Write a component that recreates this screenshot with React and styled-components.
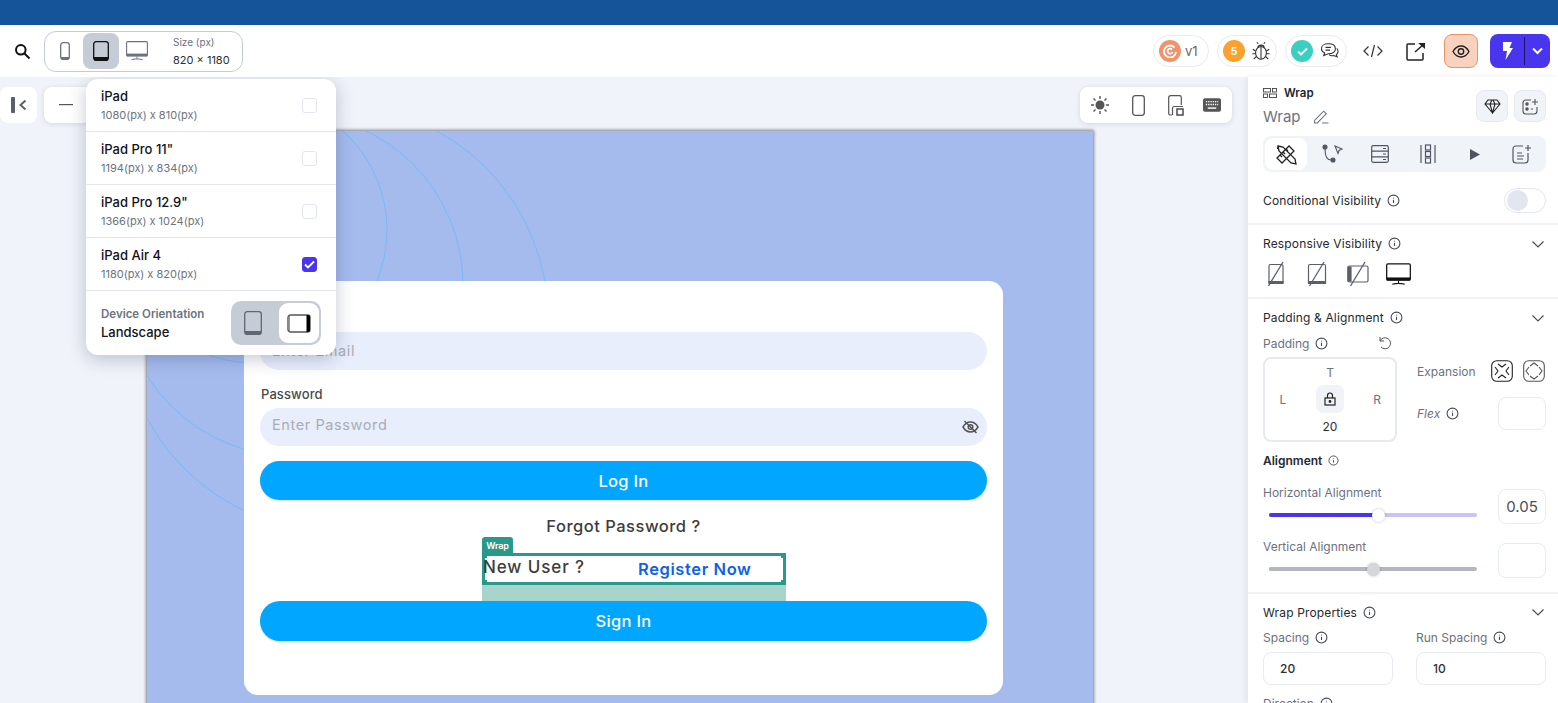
import React from "react";
import styled, { createGlobalStyle } from "styled-components";

const Global = createGlobalStyle`
  html, body { margin: 0; padding: 0; height: 100%; overflow: hidden; background: #f0f3f9; }
  body { font-family: Inter, "Open Sans", sans-serif; color: #2b2f36; }
  * { box-sizing: border-box; }
`;

const Page = styled.div`
  width: 1558px;
  height: 703px;
  display: flex;
  flex-direction: column;
  overflow: hidden;
`;
const TopStrip = styled.div`
  height: 25px;
  background: #155499;
  flex: none;
`;
const Toolbar = styled.header`
  height: 52px;
  flex: none;
  background: #fff;
  display: flex;
  align-items: center;
  padding: 0 8px 0 14px;
`;
const DeviceGroup = styled.div`
  margin-left: 13px;
  width: 199px;
  height: 41px;
  border: 1px solid #c3ccd6;
  border-radius: 12px;
  display: flex;
  align-items: center;
  padding: 0 2px;
`;
const DeviceBtn = styled.div`
  width: 36px;
  height: 36px;
  border-radius: 8px;
  display: flex;
  align-items: center;
  justify-content: center;
  background: ${(p) => (p.$active ? "#c5ccd6" : "transparent")};
`;
const SizeInfo = styled.div`
  margin-left: 18px;
  display: flex;
  flex-direction: column;
  gap: 5px;
  font-size: 10px;
  color: #6b7280;
  strong { font-weight: 400; font-size: 11px; color: #2b2f36; }
`;
const ToolRight = styled.div`
  margin-left: auto;
  display: flex;
  align-items: center;
`;
const Pill = styled.div`
  width: ${(p) => p.$w}px;
  height: 32px;
  border: 1px solid #e8ebf1;
  border-radius: 16px;
  display: flex;
  align-items: center;
  gap: ${(p) => p.$gap}px;
  padding-left: 5px;
  margin-right: 8px;
  font-size: 13px;
  color: #5f6673;
`;
const Dot = styled.span`
  width: 22px;
  height: 22px;
  border-radius: 50%;
  background: ${(p) => p.$bg};
  color: #fff;
  font-size: 11px;
  font-weight: 700;
  display: flex;
  align-items: center;
  justify-content: center;
  flex: none;
`;
const PlainIcon = styled.div`
  width: 34px;
  display: flex;
  justify-content: center;
  margin-left: ${(p) => p.$ml || 0}px;
`;
const EyeBtn = styled.div`
  margin-left: 11px;
  width: 34px;
  height: 34px;
  border-radius: 8px;
  background: #f8d2be;
  border: 1.5px solid #ee9165;
  display: flex;
  align-items: center;
  justify-content: center;
`;
const RunBtn = styled.div`
  margin-left: 12px;
  width: 60px;
  height: 34px;
  border-radius: 8px;
  background: #4a35ee;
  display: flex;
  align-items: center;
`;
const RunPart = styled.div`
  width: ${(p) => p.$w}px;
  height: 28px;
  display: flex;
  align-items: center;
  justify-content: center;
  border-left: ${(p) => (p.$line ? "1px solid #1b1466" : "none")};
`;

const Main = styled.div`
  flex: 1;
  min-height: 0;
  display: flex;
`;
const Canvas = styled.main`
  position: relative;
  flex: 1;
  min-width: 0;
  overflow: hidden;
  padding-top: 10px;
  background: #f0f3f9;
`;
const CanvasBar = styled.div`
  display: flex;
  align-items: flex-start;
  height: 44px;
  padding-right: 16px;
`;
const FloatCard = styled.div`
  height: 36px;
  background: #fff;
  border-radius: 8px;
  display: flex;
  align-items: center;
  justify-content: ${(p) => p.$justify || "center"};
  gap: ${(p) => p.$gap || 0}px;
  width: ${(p) => p.$w}px;
  margin-left: ${(p) => p.$ml || "0"};
  box-shadow: ${(p) => (p.$flat ? "none" : "0 1px 5px rgba(40,50,80,.14)")};
  padding: ${(p) => p.$pad || 0};
`;
const CardIcon = styled.span`
  width: 18px;
  display: flex;
  justify-content: center;
  margin-left: ${(p) => p.$ml || 0}px;
`;
const Device = styled.div`
  position: relative;
  margin-left: 147px;
  width: 946px;
  height: 620px;
  background: #a5bbee;
  box-shadow: 0 0 3px 1px rgba(50, 55, 65, 0.6);
  padding: 150px 0 0 97px;
`;
const Arcs = styled.svg`
  position: absolute;
  left: 0;
  top: 0;
`;
const FormCard = styled.div`
  position: relative;
  width: 759px;
  height: 414px;
  background: #fff;
  border-radius: 14px;
  padding: 51px 16px 0;
  color: #3d3d3d;
  font-weight: 500;
`;
const Field = styled.div`
  height: 38px;
  border-radius: 19px;
  background: #e8eefc;
  color: #a9adb5;
  font-size: 14.5px;
  display: flex;
  align-items: center;
  justify-content: space-between;
  padding: 0 8px ${(p) => p.$lift}px 12px;
  font-weight: 400;
  letter-spacing: 0.6px;
  svg { margin-top: ${(p) => p.$lift}px; }
`;
const FieldLabel = styled.div`
  font-size: 13px;
  font-weight: 500;
  color: #4a4a4a;
  margin: 16px 0 6px 1px;
  line-height: 16px;
  letter-spacing: 0.1px;
`;
const PrimaryBtn = styled.div`
  height: ${(p) => p.$h || 39}px;
  border-radius: 20px;
  background: #00a6ff;
  color: #fff;
  font-size: 16.5px;
  font-weight: 500;
  letter-spacing: 0.3px;
  display: flex;
  align-items: center;
  justify-content: center;
  margin-top: ${(p) => p.$mt}px;
  box-shadow: 0 1px 2px rgba(0, 0, 0, 0.15);
  position: relative;
`;
const Forgot = styled.div`
  text-align: center;
  font-size: 16.5px;
  line-height: 20px;
  margin-top: 16px;
  letter-spacing: 0.5px;
`;
const WrapSlot = styled.div`
  position: relative;
  margin: 17px 0 0 222px;
  width: 304px;
  height: 48px;
  background: #a8d4cc;
`;
const WrapSelect = styled.div`
  height: 32px;
  background: #fff;
  border: 3px solid #28998a;
  display: flex;
  align-items: flex-start;
  font-size: 17px;
  line-height: 20px;
`;
const WrapTag = styled.div`
  position: absolute;
  left: 0;
  top: -16px;
  height: 16px;
  width: 31px;
  background: #28998a;
  color: #fff;
  border-radius: 3px 3px 0 0;
  font-size: 9px;
  font-weight: 600;
  letter-spacing: -0.2px;
  display: flex;
  align-items: center;
  justify-content: center;
`;
const Handle = styled.i`
  position: absolute;
  width: 5px;
  height: 5px;
  background: #28998a;
  ${(p) => (p.$top ? "top: 0;" : "bottom: 16px;")}
  ${(p) => (p.$left ? "left: 0;" : "right: 0;")}
`;
const RegisterLink = styled.span`
  color: #0f62e6;
  font-size: 16.5px;
  font-weight: 600;
  margin: 3px 0 0 53px;
  letter-spacing: 0.6px;
`;
const NewUser = styled.span`
  margin: 1px 0 0 -2px;
  letter-spacing: 0.9px;
`;

const Popup = styled.div`
  position: absolute;
  left: 86px;
  top: 2px;
  width: 250px;
  height: 276px;
  background: #fff;
  border-radius: 12px;
  box-shadow: 0 4px 18px rgba(30, 40, 70, 0.25);
  display: flex;
  flex-direction: column;
  z-index: 3;
`;
const PopRow = styled.div`
  height: 53px;
  flex: none;
  border-bottom: 1px solid #e3e6ee;
  display: flex;
  align-items: center;
  justify-content: space-between;
  padding: 0 19px 0 15px;
`;
const PopName = styled.div`
  font-size: 13px;
  font-weight: 500;
  color: #11131a;
  line-height: 18px;
  margin-bottom: 2px;
`;
const PopSub = styled.div`
  font-size: 11px;
  color: #6d7380;
  line-height: 16px;
`;
const Check = styled.span`
  width: 15px;
  height: 15px;
  border-radius: 3px;
  border: 1px solid ${(p) => (p.$on ? "#4a35ee" : "#e3e6ee")};
  background: ${(p) => (p.$on ? "#4a35ee" : "#fff")};
  display: flex;
  align-items: center;
  justify-content: center;
`;
const OrientRow = styled.div`
  flex: 1;
  display: flex;
  align-items: center;
  justify-content: space-between;
  padding: 0 15px;
`;
const OrientLabel = styled.div`
  font-size: 11.5px;
  font-weight: 600;
  color: #6d7380;
  line-height: 16px;
  margin-bottom: 2px;
`;
const OrientValue = styled.div`
  font-size: 13px;
  font-weight: 500;
  color: #11131a;
`;
const OrientSwitch = styled.div`
  width: 90px;
  height: 44px;
  border-radius: 10px;
  background: #c5ccd6;
  display: flex;
  justify-content: flex-end;
  align-items: center;
  padding: 2px;
`;
const OrientPortrait = styled.div`
  width: 48px;
  margin-right: 6px;
  display: flex;
  justify-content: center;
`;
const OrientActive = styled.div`
  width: 40px;
  height: 40px;
  border-radius: 9px;
  background: #fff;
  display: flex;
  align-items: center;
  justify-content: center;
  flex: none;
`;

const Panel = styled.aside`
  width: 310px;
  flex: none;
  background: #fff;
  box-shadow: -2px 0 6px rgba(40, 50, 80, 0.08);
  overflow: hidden;
  position: relative;
`;
const PanelHead = styled.div`
  padding: 8px 12px 0 15px;
  height: 111px;
`;
const HeadTop = styled.div`
  display: flex;
  justify-content: space-between;
  height: 51px;
`;
const Kind = styled.div`
  display: flex;
  align-items: center;
  gap: 7px;
  font-size: 11.5px;
  font-weight: 600;
  color: #20242b;
  height: 16px;
`;
const WrapName = styled.div`
  display: flex;
  align-items: center;
  gap: 12px;
  font-size: 15px;
  color: #6b7280;
  margin-top: 5px;
  height: 20px;
`;
const HeadBtns = styled.div`
  display: flex;
  gap: 6px;
  padding-top: 5px;
`;
const SquareBtn = styled.div`
  width: 32px;
  height: 32px;
  border-radius: 8px;
  background: #f0f3f8;
  border: 1px solid #e6e9f0;
  display: flex;
  align-items: center;
  justify-content: center;
`;
const Tabs = styled.div`
  height: 36px;
  width: 283px;
  background: #f0f3f8;
  border-radius: 8px;
  display: flex;
  align-items: center;
  padding: 2px;
  gap: 5.2px;
`;
const Tab = styled.div`
  width: 42px;
  height: 32px;
  border-radius: 8px;
  background: ${(p) => (p.$active ? "#fff" : "transparent")};
  display: flex;
  align-items: center;
  justify-content: center;
`;
const Section = styled.section`
  height: ${(p) => p.$h}px;
  border-bottom: ${(p) => (p.$noline ? "none" : "2px solid #f0f2f8")};
  padding: 0 13px 0 15px;
  position: relative;
`;
const Row = styled.div`
  display: flex;
  align-items: center;
  justify-content: space-between;
  height: ${(p) => p.$h || 24}px;
`;
const Title = styled.div`
  display: flex;
  align-items: center;
  gap: 6px;
  font-size: 12px;
  font-weight: ${(p) => (p.$bold ? 600 : 400)};
  letter-spacing: ${(p) => (p.$bold ? 0 : 0.15)}px;
  color: #25282e;
`;
const SubLabel = styled.div`
  display: flex;
  align-items: center;
  gap: 6px;
  font-size: 12px;
  line-height: 15px;
  color: #6b7280;
  font-style: ${(p) => (p.$italic ? "italic" : "normal")};
  margin-top: ${(p) => p.$mt || 0}px;
`;
const ResetIcon = styled.svg`
  margin-left: 44px;
`;
const Toggle = styled.div`
  width: 42px;
  height: 25px;
  margin-right: -1px;
  border: 1px solid #e3e6ee;
  border-radius: 13px;
  padding: 2px;
  display: flex;
  align-items: center;
  &::before {
    content: "";
    width: 21px;
    height: 21px;
    border-radius: 50%;
    background: #e2e6ee;
  }
`;
const IconRow = styled.div`
  display: flex;
  align-items: center;
  gap: 15px;
  margin-top: -1px;
  height: 26px;
`;
const PadRow = styled.div`
  display: flex;
  margin: 7px -1px 0 0;
`;
const PadBox = styled.div`
  width: 134px;
  height: 85px;
  border: 2px solid #e6e9f0;
  border-radius: 8px;
  display: grid;
  grid-template-columns: 30px 1fr 30px;
  grid-template-rows: 26px 28px 27px;
  justify-items: center;
  align-items: center;
  padding: 0 3px;
  font-size: 12px;
  color: #6b7280;
`;
const PadTop = styled.span`
  grid-column: 2;
`;
const PadLeft = styled.span`
  grid-column: 1;
`;
const PadValue = styled.span`
  grid-column: 2;
  color: #2b2f36;
`;
const LockWrap = styled.div`
  width: 28px;
  height: 28px;
  border-radius: 7px;
  background: #f0f3f8;
  display: flex;
  align-items: center;
  justify-content: center;
`;
const PadSide = styled.div`
  flex: 1;
  padding-left: 20px;
`;
const ExpRow = styled.div`
  display: flex;
  align-items: center;
  height: 26px;
  margin: 1px 0 13px;
  padding-right: 1px;
  font-size: 12px;
  color: #6b7280;
  span { flex: 1; }
  svg { margin-left: 10px; }
`;
const SmallBox = styled.div`
  width: 48px;
  height: ${(p) => p.$h || 33}px;
  margin-top: ${(p) => p.$mt || 0}px;
  margin-right: ${(p) => p.$mr || 0}px;
  border: 1px solid #e8ebf1;
  border-radius: 8px;
  font-size: 15px;
  color: #4a4f58;
  display: flex;
  align-items: center;
  justify-content: center;
  flex: none;
`;
const SliderRow = styled.div`
  display: flex;
  justify-content: space-between;
  align-items: flex-start;
  height: ${(p) => p.$h}px;
  margin: ${(p) => p.$mt || 0}px -1px 0 0;
`;
const SliderCol = styled.div`
  width: 214px;
  padding-top: 1px;
`;
const Track = styled.div`
  position: relative;
  margin: 13px 0 0 6px;
  width: 208px;
  height: 4px;
  border-radius: 2px;
  background: ${(p) => (p.$muted ? "#b3b7bd" : "#c9c2fb")};
  &::before {
    content: "";
    position: absolute;
    left: 0;
    top: 0;
    bottom: 0;
    width: ${(p) => p.$pct}%;
    border-radius: 2px;
    background: ${(p) => (p.$muted ? "#b3b7bd" : "#4a35ee")};
  }
`;
const Thumb = styled.i`
  position: absolute;
  left: ${(p) => p.$pct}%;
  top: 50%;
  width: 13px;
  height: 13px;
  margin: -6.5px 0 0 -6.5px;
  border-radius: 50%;
  background: ${(p) => (p.$muted ? "#d4d6da" : "#fff")};
  box-shadow: 0 0 3px rgba(0, 0, 0, 0.25);
`;
const SpacingGrid = styled.div`
  display: grid;
  grid-template-columns: 130px 130px;
  justify-content: space-between;
  margin-right: -1px;
`;
const ValueBox = styled.div`
  height: 33px;
  margin-top: 7px;
  border: 1px solid #e8ebf1;
  border-radius: 8px;
  font-size: 12px;
  font-weight: 500;
  color: #2b2f36;
  display: flex;
  align-items: center;
  padding-left: 16px;
`;

const Info = ({ s = 13 }) => (
  <svg width={s} height={s} viewBox="0 0 12 12" fill="none" stroke="#444a55" strokeWidth="1">
    <circle cx="6" cy="6" r="5" />
    <path d="M6 5.400v3M6 3.400v.8" />
  </svg>
);
const Chevron = ({ c = "#4a4f58", s = 14 }) => (
  <svg width={s} height={s} viewBox="0 0 14 14" fill="none" stroke={c} strokeWidth="1.200">
    <path d="M1.500 4.500 7 10l5.500-5.500" />
  </svg>
);
const Search = () => (
  <svg width="17" height="17" viewBox="0 0 17 17" fill="none" stroke="#111" strokeWidth="2">
    <circle cx="6.800" cy="6.800" r="4.800" />
    <path d="m10.500 10.500 5 5" />
  </svg>
);
const TabletShape = ({ w = 17, h = 20, c = "#111", foot = 3 }) => (
  <svg width={w} height={h} viewBox={`0 0 ${w} ${h}`} fill="none">
    <rect x=".7" y=".7" width={w - 1.4} height={h - 1.4} rx="2.500" stroke={c} strokeWidth="1.300" />
    <path d={`M.7 ${h - foot - 1}h${w - 1.4}v${foot - 1}a2 2 0 0 1-2 2h-${w - 5.4}a2 2 0 0 1-2-2z`} fill={c} />
  </svg>
);
const Monitor = ({ c = "#6b7280", w = 22, h = 20 }) => (
  <svg width={w} height={h} viewBox="0 0 22 20" fill="none">
    <rect x=".6" y=".6" width="20.800" height="14.400" rx="1" stroke={c} strokeWidth="1.100" />
    <rect x=".6" y="12.600" width="20.800" height="2.600" fill={c} />
    <path d="M11 15.500v2M5.500 18.600c3-.9 8-.9 11 0" stroke={c} strokeWidth="1" />
  </svg>
);
const Landscape = () => (
  <svg width="24" height="19" viewBox="0 0 24 19" fill="none">
    <rect x="1" y="1" width="22" height="17" rx="2.500" stroke="#555" strokeWidth="1.400" />
    <path d="M2 1.700h1v15.600H2z" fill="#e08a1e" />
    <path d="M19.500 1h1.500a2 2 0 0 1 2 2v13a2 2 0 0 1-2 2h-1.500z" fill="#000" />
  </svg>
);
const Tick = () => (
  <svg width="11" height="9" viewBox="0 0 11 9" fill="none" stroke="#fff" strokeWidth="1.800">
    <path d="m1 4.500 3 3 6-6" />
  </svg>
);
const Slashed = ({ w, h, land }) => (
  <svg width="26" height="26" viewBox="0 0 26 26" fill="none" stroke="#5a5f68" strokeWidth="1.200">
    <rect x={13 - w / 2} y={13 - h / 2} width={w} height={h} rx="1.500" />
    {land ? <path d={`M${13 - w / 2} ${13 - h / 2 + 1}h3v${h - 2}h-3z`} fill="#5a5f68" /> : <path d={`M${13 - w / 2} ${13 + h / 2 - 2}h${w}v2h-${w}z`} fill="#5a5f68" />}
    <path d="M5.500 25 20 1" strokeWidth="1.300" />
  </svg>
);

function DeviceOption({ name, size, on }) {
  return (
    <PopRow>
      <div>
        <PopName>{name}</PopName>
        <PopSub>{size}</PopSub>
      </div>
      <Check $on={on}>{on && <Tick />}</Check>
    </PopRow>
  );
}

const S = "#4f5560";

export default function App() {
  return (
    <Page>
      <Global />
      <TopStrip />
      <Toolbar>
        <Search />
        <DeviceGroup>
          <DeviceBtn>
            <TabletShape w={10} h={18} c="#6b7280" foot={2} />
          </DeviceBtn>
          <DeviceBtn $active>
            <TabletShape w={16} h={20} />
          </DeviceBtn>
          <DeviceBtn>
            <Monitor />
          </DeviceBtn>
          <SizeInfo>
            <span>Size (px)</span>
            <strong>820 x 1180</strong>
          </SizeInfo>
        </DeviceGroup>
        <ToolRight>
          <Pill $w={56} $gap={4}>
            <Dot $bg="#f0936a">
              <svg width="14" height="14" viewBox="0 0 14 14" fill="none" stroke="#fff" strokeWidth="1.800">
                <path d="M11.500 3.500A6 6 0 1 0 13 8" />
                <path d="M9 5.500A2.500 2.500 0 1 0 9.500 8" />
              </svg>
            </Dot>
            v1
          </Pill>
          <Pill $w={60} $gap={6}>
            <Dot $bg="#fba12d">5</Dot>
            <svg width="20" height="20" viewBox="0 0 22 22" fill="none" stroke="#333" strokeWidth="1.200">
              <ellipse cx="11" cy="13" rx="6" ry="7" />
              <path d="M11 6v14M7.500 7.500c0-4 7-4 7 0M8 3 6.500 1.500M14 3l1.500-1.500M5 11 2 9M17 11l3-2M5 14H1.500M17 14h3.500M6 17l-3 3M16 17l3 3" />
            </svg>
          </Pill>
          <Pill $w={62} $gap={7}>
            <Dot $bg="#3acfc0">
              <Tick />
            </Dot>
            <svg width="20" height="18" viewBox="0 0 22 20" fill="none" stroke="#333" strokeWidth="1.200">
              <path d="M9 2c4.500 0 8 2 8 5.500S13.500 13 9 13l-5 2 1-3C2.500 11 1.500 9 1.500 7.500 1.500 4 5 2 9 2z" />
              <path d="M6 6h6M6 9h5M18.500 7c2 2 2 5-.5 7l1 2.500-4-1.500c-2 .5-4 0-5-1" />
            </svg>
          </Pill>
          <PlainIcon $ml={1}>
            <svg width="20" height="14" viewBox="0 0 20 14" fill="none" stroke="#333" strokeWidth="1.200">
              <path d="M5.500 2.500 1 7l4.500 4.500M14.500 2.500 19 7l-4.500 4.500M11.500 1 8.500 13" />
            </svg>
          </PlainIcon>
          <PlainIcon $ml={9}>
            <svg width="20" height="19" viewBox="0 0 20 19" fill="none" stroke="#222" strokeWidth="1.500">
              <path d="M9 2H2a1 1 0 0 0-1 1v14a1 1 0 0 0 1 1h14a1 1 0 0 0 1-1v-6" />
              <path d="M9 10 18 2" />
              <path d="M12 1h7v6z" fill="#222" stroke="none" />
            </svg>
          </PlainIcon>
          <EyeBtn>
            <svg width="18" height="13" viewBox="0 0 18 13" fill="none" stroke="#222" strokeWidth="1.400">
              <path d="M1 6.500C3 3 5.800 1 9 1s6 2 8 5.500C15 10 12.200 12 9 12S3 10 1 6.500z" />
              <circle cx="9" cy="6.500" r="2.700" />
            </svg>
          </EyeBtn>
          <RunBtn>
            <RunPart $w={34}>
              <svg width="11" height="18" viewBox="0 0 11 18">
                <path d="M1 0h9L7.500 6H11L3.500 18 5 9H1z" fill="#fff" />
              </svg>
            </RunPart>
            <RunPart $w={26} $line>
              <svg width="11" height="8" viewBox="0 0 11 8" fill="none" stroke="#fff" strokeWidth="2">
                <path d="m1 1.500 4.500 4.500L10 1.500" />
              </svg>
            </RunPart>
          </RunBtn>
        </ToolRight>
      </Toolbar>

      <Main>
        <Canvas>
          <CanvasBar>
            <FloatCard $w={37} $flat>
              <svg width="16" height="18" viewBox="0 0 16 18">
                <rect x="0" y="1" width="4" height="16" rx="1" fill="#5a606b" />
                <path d="M14.500 4.500 9.500 9l5 4.500" fill="none" stroke="#5a606b" strokeWidth="2" />
              </svg>
            </FloatCard>
            <FloatCard $w={70} $ml="7px" $justify="flex-start" $pad="0 0 0 15px">
              <svg width="14" height="2" viewBox="0 0 14 2">
                <rect width="14" height="1.200" fill="#555" />
              </svg>
            </FloatCard>
            <FloatCard $w={152} $ml="auto" $justify="flex-start" $gap={20} $pad="0 0 0 11px">
              <CardIcon>
                <svg width="18" height="18" viewBox="0 0 18 18" fill="#555">
                  <circle cx="9" cy="9" r="4.500" />
                  <path d="M9 0v3M9 15v3M0 9h3M15 9h3M2.500 2.500l2 2M13.500 13.500l2 2M15.500 2.500l-2 2M4.500 13.500l-2 2" stroke="#555" strokeWidth="1.400" />
                </svg>
              </CardIcon>
              <CardIcon>
                <svg width="13" height="21" viewBox="0 0 13 21" fill="none" stroke="#555" strokeWidth="1.300">
                  <rect x=".7" y=".7" width="11.600" height="19.600" rx="2.500" />
                </svg>
              </CardIcon>
              <CardIcon>
                <svg width="16" height="21" viewBox="0 0 16 21" fill="none" stroke="#555" strokeWidth="1.200">
                  <path d="M4 20H2.500A1.800 1.800 0 0 1 .7 18.200V2.500A1.800 1.800 0 0 1 2.500.7h9a1.800 1.800 0 0 1 1.800 1.800V10" />
                  <path d="M4.500 20v-6.500a2 2 0 0 1 2-2H15" />
                  <rect x="9" y="14" width="6" height="6" strokeWidth="1.600" />
                </svg>
              </CardIcon>
              <CardIcon $ml={-2}>
                <svg width="19" height="14" viewBox="0 0 19 14">
                  <rect width="19" height="14" rx="2" fill="#555" />
                  <path d="M3 3.500h13M3 6.500h13" stroke="#fff" strokeWidth="1.400" strokeDasharray="1.400 1" />
                  <rect x="5" y="9.500" width="9" height="1.500" fill="#fff" />
                </svg>
              </CardIcon>
            </FloatCard>
          </CanvasBar>

          <Device>
            <Arcs width="946" height="620" viewBox="147 131 946 620" fill="none" stroke="#7ab8fa" strokeWidth="1">
              <circle cx="254" cy="230" r="133" />
              <circle cx="292" cy="285" r="171" />
              <circle cx="335" cy="318" r="213" />
            </Arcs>
            <FormCard>
              <Field $lift={2}>Enter Email</Field>
              <FieldLabel>Password</FieldLabel>
              <Field $lift={6}>
                Enter Password
                <svg width="17" height="14" viewBox="0 0 17 14" fill="none" stroke="#555" strokeWidth="1.500">
                  <path d="M1 7c2-3.400 4.500-5 7.500-5s5.500 1.600 7.500 5c-2 3.400-4.500 5-7.500 5S3 10.400 1 7z" />
                  <circle cx="8.500" cy="7" r="2.300" />
                  <path d="M2.500 1 14.500 13" />
                </svg>
              </Field>
              <PrimaryBtn $mt={15}>Log In</PrimaryBtn>
              <Forgot>Forgot Password ?</Forgot>
              <WrapSlot>
                <WrapTag>Wrap</WrapTag>
                <WrapSelect>
                  <NewUser>New User ?</NewUser>
                  <RegisterLink>Register Now</RegisterLink>
                </WrapSelect>
                <Handle $top $left />
                <Handle $top />
                <Handle $left />
                <Handle />
              </WrapSlot>
              <PrimaryBtn $mt={0} $h={40}>Sign In</PrimaryBtn>
            </FormCard>
          </Device>

          <Popup>
            <DeviceOption name="iPad" size="1080(px) x 810(px)" />
            <DeviceOption name={'iPad Pro 11"'} size="1194(px) x 834(px)" />
            <DeviceOption name={'iPad Pro 12.9"'} size="1366(px) x 1024(px)" />
            <DeviceOption name="iPad Air 4" size="1180(px) x 820(px)" on />
            <OrientRow>
              <div>
                <OrientLabel>Device Orientation</OrientLabel>
                <OrientValue>Landscape</OrientValue>
              </div>
              <OrientSwitch>
                <OrientPortrait>
                  <TabletShape w={18} h={24} c="#606672" />
                </OrientPortrait>
                <OrientActive>
                  <Landscape />
                </OrientActive>
              </OrientSwitch>
            </OrientRow>
          </Popup>
        </Canvas>

        <Panel>
          <PanelHead>
            <HeadTop>
              <div>
                <Kind>
                  <svg width="14" height="10" viewBox="0 0 14 10" fill="none" stroke="#444" strokeWidth=".9">
                    <rect x=".5" y=".5" width="7" height="3.500" />
                    <rect x="9.500" y=".5" width="4" height="3.500" />
                    <rect x=".5" y="6" width="4" height="3.500" />
                    <rect x="6.500" y="6" width="7" height="3.500" />
                  </svg>
                  Wrap
                </Kind>
                <WrapName>
                  Wrap
                  <svg width="16" height="16" viewBox="0 0 15 15" fill="none" stroke="#6b7280" strokeWidth="1">
                    <path d="M1.500 11.500 10 3l2.500 2.500L4 14H1.500zM8.500 14H14.500" />
                  </svg>
                </WrapName>
              </div>
              <HeadBtns>
                <SquareBtn>
                  <svg width="17" height="15" viewBox="0 0 17 15" fill="none" stroke="#222" strokeWidth="1.100">
                    <path d="M4 1h9l3 4-7.500 9L1 5zM1 5h15M6 5l2.500 9L11 5 9 1H8z" />
                  </svg>
                </SquareBtn>
                <SquareBtn>
                  <svg width="17" height="17" viewBox="0 0 17 17" fill="none" stroke="#555" strokeWidth="1.100">
                    <path d="M9 2H4a3 3 0 0 0-3 3v8a3 3 0 0 0 3 3h8a3 3 0 0 0 3-3V9" />
                    <path d="M13 1v6M10 4h6" />
                    <circle cx="5" cy="6" r="1.200" fill="#555" />
                    <circle cx="5" cy="11" r="1.200" fill="#555" />
                    <path d="M9 11h2" />
                  </svg>
                </SquareBtn>
              </HeadBtns>
            </HeadTop>
            <Tabs>
              <Tab $active>
                <svg width="22" height="22" viewBox="0 0 22 22" fill="none" stroke="#222" strokeWidth="1.300">
                  <path d="m2 15 12-12 5 5L7 20zM5 12l2 2M8 9l2 2M11 6l2 2" />
                  <path d="M3 3l5 1 12 12 1 5-5-1L4 8zM3 3l-.5 3" />
                </svg>
              </Tab>
              <Tab>
                <svg width="22" height="20" viewBox="0 0 22 20" fill="none" stroke={S} strokeWidth="1.100">
                  <circle cx="3" cy="3" r="2" fill={S} />
                  <circle cx="11" cy="16" r="2" fill={S} />
                  <path d="M3 5c0 7 2 11 6 11M13 2l7 3-3 1.500-1 3z" />
                </svg>
              </Tab>
              <Tab>
                <svg width="18" height="18" viewBox="0 0 18 18" fill="none" stroke={S} strokeWidth="1.200">
                  <rect x=".7" y=".7" width="16.600" height="16.600" rx="1.500" />
                  <path d="M.7 6.200h16.600M.7 11.800h16.600M12 3.500h3M12 9h3M12 14.500h3" />
                </svg>
              </Tab>
              <Tab>
                <svg width="16" height="20" viewBox="0 0 16 20" fill="none" stroke={S} strokeWidth="1.200">
                  <path d="M1 1v18M15 1v18" />
                  <rect x="5.500" y="1" width="5" height="5" />
                  <rect x="5.500" y="7.500" width="5" height="5" />
                  <rect x="5.500" y="14" width="5" height="5" />
                </svg>
              </Tab>
              <Tab>
                <svg width="12" height="13" viewBox="0 0 12 13">
                  <path d="M1 1v11l10-5.500z" fill={S} />
                </svg>
              </Tab>
              <Tab>
                <svg width="20" height="20" viewBox="0 0 20 20" fill="none" stroke={S} strokeWidth="1.200">
                  <path d="M11 2H4a3 3 0 0 0-3 3v11a3 3 0 0 0 3 3h9a3 3 0 0 0 3-3V9M16 1v6M13 4h6M5 9h5M5 12h7M5 15h6" />
                </svg>
              </Tab>
            </Tabs>
          </PanelHead>

          <Section $h={37}>
            <Row $h={25}>
              <Title>
                Conditional Visibility <Info />
              </Title>
              <Toggle />
            </Row>
          </Section>

          <Section $h={74}>
            <Row $h={37}>
              <Title>
                Responsive Visibility <Info />
              </Title>
              <Chevron />
            </Row>
            <IconRow>
              <Slashed w={14} h={19} />
              <Slashed w={17} h={19} />
              <Slashed w={20} h={16} land />
              <Monitor c="#111" w={25} h={23} />
            </IconRow>
          </Section>

          <Section $h={295}>
            <Row $h={37}>
              <Title>
                Padding &amp; Alignment <Info />
              </Title>
              <Chevron />
            </Row>
            <Row $h={14}>
              <SubLabel>
                Padding <Info />
                <ResetIcon width="14" height="14" viewBox="0 0 14 14" fill="none" stroke="#555" strokeWidth="1">
                  <path d="M2 1v4h4M2 5a5.500 5.500 0 1 1 1 6" />
                </ResetIcon>
              </SubLabel>
            </Row>
            <PadRow>
              <PadBox>
                <PadTop>T</PadTop>
                <PadLeft>L</PadLeft>
                <LockWrap>
                  <svg width="12" height="14" viewBox="0 0 12 14" fill="none" stroke="#222" strokeWidth="1.200">
                    <rect x="1" y="6" width="10" height="7" />
                    <path d="M3.500 6V3.500a2.500 2.500 0 0 1 5 0V6" />
                    <circle cx="6" cy="9.500" r=".8" fill="#222" />
                  </svg>
                </LockWrap>
                <span>R</span>
                <PadValue>20</PadValue>
              </PadBox>
              <PadSide>
                <ExpRow>
                  <span>Expansion</span>
                  <svg width="22" height="22" viewBox="0 0 22 22" fill="none" stroke="#222" strokeWidth="1.100">
                    <rect x=".7" y=".7" width="20.600" height="20.600" rx="5" />
                    <path d="m7 4 4 3 4-3M7 18l4-3 4 3M4 7l3 4-3 4M18 7l-3 4 3 4" />
                  </svg>
                  <svg width="22" height="22" viewBox="0 0 22 22" fill="none" stroke="#555" strokeWidth="1.100">
                    <rect x=".7" y=".7" width="20.600" height="20.600" rx="5" />
                    <path d="m7 6 4-3 4 3M7 16l4 3 4-3M6 7l-3 4 3 4M16 7l3 4-3 4" />
                  </svg>
                </ExpRow>
                <Row $h={33}>
                  <SubLabel $italic>
                    Flex <Info />
                  </SubLabel>
                  <SmallBox />
                </Row>
              </PadSide>
            </PadRow>
            <Row $h={36}>
              <Title $bold>
                Alignment <Info s={11} />
              </Title>
            </Row>
            <SliderRow $h={54} $mt={6}>
              <SliderCol>
                <SubLabel>Horizontal Alignment</SubLabel>
                <Track $pct={52.5}>
                  <Thumb $pct={52.5} />
                </Track>
              </SliderCol>
              <SmallBox $h={35} $mt={5}>0.05</SmallBox>
            </SliderRow>
            <SliderRow $h={50}>
              <SliderCol>
                <SubLabel>Vertical Alignment</SubLabel>
                <Track $pct={50} $muted>
                  <Thumb $pct={50} $muted />
                </Track>
              </SliderCol>
              <SmallBox $h={35} $mt={5} />
            </SliderRow>
          </Section>

          <Section $h={120} $noline>
            <Row $h={36}>
              <Title>
                Wrap Properties <Info />
              </Title>
              <Chevron />
            </Row>
            <SpacingGrid>
              <div>
                <SubLabel>
                  Spacing <Info />
                </SubLabel>
                <ValueBox>20</ValueBox>
              </div>
              <div>
                <SubLabel>
                  Run Spacing <Info />
                </SubLabel>
                <ValueBox>10</ValueBox>
              </div>
            </SpacingGrid>
            <SubLabel $mt={11}>
              Direction <Info />
            </SubLabel>
          </Section>
        </Panel>
      </Main>
    </Page>
  );
}
